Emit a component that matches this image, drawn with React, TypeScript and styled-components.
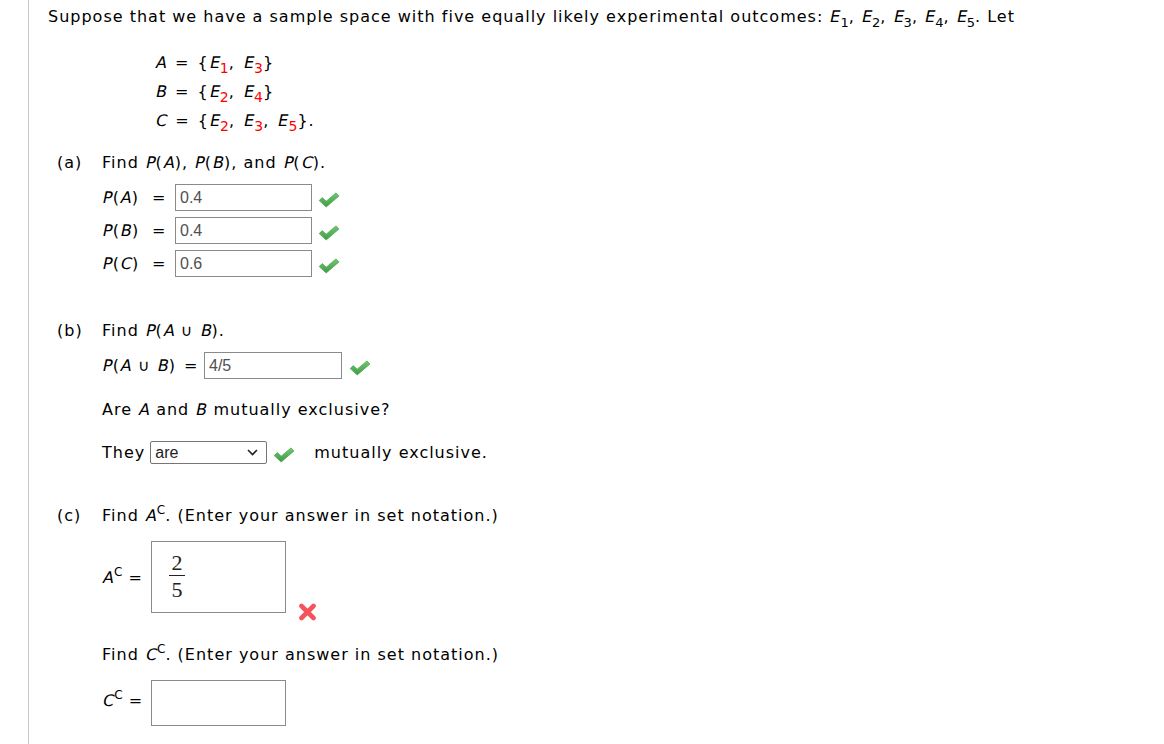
import React from "react";
import styled, { createGlobalStyle } from "styled-components";

const Global = createGlobalStyle`
  html, body { margin: 0; padding: 0; background: #fff; }
  body {
    font-family: Verdana, "DejaVu Sans", sans-serif;
    font-size: 16px;
    letter-spacing: 1px;
    color: #000;
  }
`;

const Page = styled.div`
  margin-left: 28px;
  border-left: 1px solid #c8c8c8;
  min-height: 744px;
  padding: 7px 0 0 19px;
  box-sizing: border-box;
`;

const Para = styled.div<{ $mt?: number }>`
  line-height: 20px;
  margin-top: ${(p) => p.$mt ?? 0}px;
  white-space: nowrap;
`;

/* slanted variable letter (Verdana italic look) */
const I = styled.i`
  font-style: normal;
  display: inline-block;
  transform: skewX(-12deg);
  transform-origin: 50% 75%;
`;

const Sub = styled.sub<{ $red?: boolean; $size?: number }>`
  font-size: ${(p) => p.$size ?? 13}px;
  vertical-align: -5px;
  line-height: 0;
  letter-spacing: 0;
  color: ${(p) => (p.$red ? "#ff0000" : "inherit")};
`;

const Sup = styled.sup`
  font-size: 12px;
  vertical-align: 7px;
  line-height: 0;
  letter-spacing: 0;
`;

const Sets = styled.div`
  margin: 26px 0 0 107px;
  display: flex;
  flex-direction: column;
  gap: 9px;
  word-spacing: 2px;
`;

const SetLine = styled.div`
  line-height: 20px;
  white-space: nowrap;
`;

const Part = styled.div<{ $mt: number }>`
  display: flex;
  margin-top: ${(p) => p.$mt}px;
  margin-left: 9px;
`;

const PartLabel = styled.div`
  width: 45px;
  line-height: 20px;
  flex: none;
`;

const PartBody = styled.div`
  display: flex;
  flex-direction: column;
`;

const Grid = styled.div<{ $cols: string; $gap: number; $mt: number }>`
  display: grid;
  grid-template-columns: ${(p) => p.$cols};
  row-gap: ${(p) => p.$gap}px;
  align-items: center;
  margin-top: ${(p) => p.$mt}px;
  white-space: nowrap;
`;

const Eq = styled.span`
  text-align: left;
`;

const Field = styled.div<{ $w: number }>`
  width: ${(p) => p.$w}px;
  height: 27px;
  box-sizing: border-box;
  border: 1px solid #8a8a8a;
  font-family: "Liberation Sans", Arial, sans-serif;
  letter-spacing: 0;
  font-size: 16px;
  color: #505050;
  padding: 0 0 0 4px;
  display: flex;
  align-items: center;
`;

const MarkWrap = styled.span<{ $pl: number }>`
  display: flex;
  align-items: center;
  padding-left: ${(p) => p.$pl}px;
  padding-top: 5px;
`;

const Row = styled.div<{ $mt: number }>`
  display: flex;
  align-items: center;
  margin-top: ${(p) => p.$mt}px;
  line-height: 20px;
  white-space: nowrap;
`;

const Select = styled.div`
  width: 117px;
  height: 23px;
  box-sizing: border-box;
  border: 1px solid #767676;
  border-radius: 2px;
  margin-left: 5px;
  display: flex;
  align-items: center;
  justify-content: space-between;
  padding: 0 8px 0 4px;
  font-family: "Liberation Sans", Arial, sans-serif;
  letter-spacing: 0;
  font-size: 16px;
  color: #222;
`;

const Tail = styled.span`
  margin-left: 19px;
`;

const BigRow = styled.div<{ $mt: number }>`
  display: flex;
  align-items: flex-start;
  margin-top: ${(p) => p.$mt}px;
`;

const BigLabel = styled.div<{ $pt: number }>`
  width: 49px;
  line-height: 20px;
  padding-top: ${(p) => p.$pt}px;
  white-space: nowrap;
`;

const BigField = styled.div<{ $h: number }>`
  width: 135px;
  height: ${(p) => p.$h}px;
  box-sizing: border-box;
  border: 1px solid #8a8a8a;
  padding: 10px 0 0 17px;
`;

const Frac = styled.div`
  display: inline-flex;
  flex-direction: column;
  align-items: center;
  font-family: "Liberation Serif", "DejaVu Serif", "Times New Roman", serif;
  letter-spacing: 0;
  font-size: 22px;
  line-height: 21px;
  color: #222;
`;

const FracBar = styled.span`
  width: 16px;
  height: 1px;
  background: #222;
  margin: 2px 0 3px;
`;

const XWrap = styled.span`
  margin: 62px 0 0 12px;
  display: flex;
`;

const Check = () => (
  <svg width="22" height="16" viewBox="0 0 22 16">
    <defs>
      <linearGradient id="cg" x1="0" y1="0" x2="0" y2="1">
        <stop offset="0" stopColor="#72c872" />
        <stop offset="1" stopColor="#3f9a45" />
      </linearGradient>
    </defs>
    <path
      d="M1.2 8.6 L4.2 5.6 L8.2 9.2 L18 0.9 L21 3.9 L8.2 15 Z"
      fill="url(#cg)"
      stroke="#4ea852"
      strokeWidth="0.8"
      strokeLinejoin="round"
    />
  </svg>
);

const Cross = () => (
  <svg width="19" height="18" viewBox="0 0 19 18">
    <path
      d="M3.5 3 L15.5 15 M15.5 3 L3.5 15"
      stroke="#f4545c"
      strokeWidth="4.6"
      strokeLinecap="round"
    />
  </svg>
);

const Chevron = () => (
  <svg width="11" height="7" viewBox="0 0 11 7">
    <path d="M1 1 L5.5 5.5 L10 1" stroke="#222" strokeWidth="1.6" fill="none" />
  </svg>
);

export default function App() {
  return (
    <>
      <Global />
      <Page>
        <Para>
          Suppose that we have a sample space with five equally likely experimental outcomes:{" "}
          <I>E</I>
          <Sub>1</Sub>, <I>E</I>
          <Sub>2</Sub>, <I>E</I>
          <Sub>3</Sub>, <I>E</I>
          <Sub>4</Sub>, <I>E</I>
          <Sub>5</Sub>. Let
        </Para>
        <Sets>
          <SetLine>
            <I>A</I> = {"{"}
            <I>E</I>
            <Sub $red $size={14}>1</Sub>, <I>E</I>
            <Sub $red $size={14}>3</Sub>
            {"}"}
          </SetLine>
          <SetLine>
            <I>B</I> = {"{"}
            <I>E</I>
            <Sub $red $size={14}>2</Sub>, <I>E</I>
            <Sub $red $size={14}>4</Sub>
            {"}"}
          </SetLine>
          <SetLine>
            <I>C</I> = {"{"}
            <I>E</I>
            <Sub $red $size={14}>2</Sub>, <I>E</I>
            <Sub $red $size={14}>3</Sub>, <I>E</I>
            <Sub $red $size={14}>5</Sub>
            {"}"}.
          </SetLine>
        </Sets>

        <Part $mt={22}>
          <PartLabel>(a)</PartLabel>
          <PartBody>
            <Para>
              Find <I>P</I>(<I>A</I>), <I>P</I>(<I>B</I>), and <I>P</I>(<I>C</I>).
            </Para>
            <Grid $cols="50px 23px 137px auto" $gap={6} $mt={11}>
              <span>
                <I>P</I>(<I>A</I>)
              </span>
              <Eq>=</Eq>
              <Field $w={137}>0.4</Field>
              <MarkWrap $pl={6}>
                <Check />
              </MarkWrap>
              <span>
                <I>P</I>(<I>B</I>)
              </span>
              <Eq>=</Eq>
              <Field $w={137}>0.4</Field>
              <MarkWrap $pl={6}>
                <Check />
              </MarkWrap>
              <span>
                <I>P</I>(<I>C</I>)
              </span>
              <Eq>=</Eq>
              <Field $w={137}>0.6</Field>
              <MarkWrap $pl={6}>
                <Check />
              </MarkWrap>
            </Grid>
          </PartBody>
        </Part>

        <Part $mt={44}>
          <PartLabel>(b)</PartLabel>
          <PartBody>
            <Para>
              Find <I>P</I>(<I>A</I> ∪ <I>B</I>).
            </Para>
            <Grid $cols="82px 20px 138px auto" $gap={0} $mt={11}>
              <span>
                <I>P</I>(<I>A</I> ∪ <I>B</I>)
              </span>
              <Eq>=</Eq>
              <Field $w={138}>4/5</Field>
              <MarkWrap $pl={7}>
                <Check />
              </MarkWrap>
            </Grid>
            <Para $mt={21}>
              Are <I>A</I> and <I>B</I> mutually exclusive?
            </Para>
            <Row $mt={21}>
              They
              <Select>
                are
                <Chevron />
              </Select>
              <MarkWrap $pl={6}>
                <Check />
              </MarkWrap>
              <Tail>mutually exclusive.</Tail>
            </Row>
          </PartBody>
        </Part>

        <Part $mt={42}>
          <PartLabel>(c)</PartLabel>
          <PartBody>
            <Para>
              Find <I>A</I>
              <Sup>C</Sup>. (Enter your answer in set notation.)
            </Para>
            <BigRow $mt={15}>
              <BigLabel $pt={27}>
                <I>A</I>
                <Sup>C</Sup> =
              </BigLabel>
              <BigField $h={72}>
                <Frac>
                  <span>2</span>
                  <FracBar />
                  <span>5</span>
                </Frac>
              </BigField>
              <XWrap>
                <Cross />
              </XWrap>
            </BigRow>
            <Para $mt={24}>
              Find <I>C</I>
              <Sup>C</Sup>. (Enter your answer in set notation.)
            </Para>
            <BigRow $mt={15}>
              <BigLabel $pt={11}>
                <I>C</I>
                <Sup>C</Sup> =
              </BigLabel>
              <BigField $h={46} />
            </BigRow>
          </PartBody>
        </Part>
      </Page>
    </>
  );
}
